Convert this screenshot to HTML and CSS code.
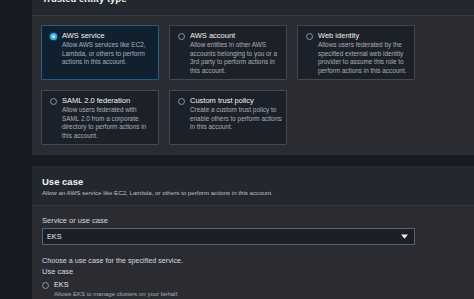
FILE: index.html
```html
<!DOCTYPE html>
<html lang="en">
<head>
    <meta charset="UTF-8">
    <meta name="viewport" content="width=device-width, initial-scale=1.0">
    <title>Select trusted entity</title>
    <link rel="stylesheet" href="styles.css">
</head>
<body>
    <div class="sidebar"></div>

    <div class="main">
        <div class="panel panel-top">
            <div class="panel-header">
                <h2>Trusted entity type</h2>
            </div>
            <div class="panel-body">
                <div class="cards">
                    <div class="card selected">
                        <span class="radio checked"></span>
                        <div class="card-text">
                            <div class="card-title">AWS service</div>
                            <div class="card-desc">Allow AWS services like EC2, Lambda, or others to perform actions in this account.</div>
                        </div>
                    </div>
                    <div class="card">
                        <span class="radio"></span>
                        <div class="card-text">
                            <div class="card-title">AWS account</div>
                            <div class="card-desc">Allow entities in other AWS accounts belonging to you or a 3rd party to perform actions in this account.</div>
                        </div>
                    </div>
                    <div class="card">
                        <span class="radio"></span>
                        <div class="card-text">
                            <div class="card-title">Web identity</div>
                            <div class="card-desc">Allows users federated by the specified external web identity provider to assume this role to perform actions in this account.</div>
                        </div>
                    </div>
                    <div class="card">
                        <span class="radio"></span>
                        <div class="card-text">
                            <div class="card-title">SAML 2.0 federation</div>
                            <div class="card-desc">Allow users federated with SAML 2.0 from a corporate directory to perform actions in this account.</div>
                        </div>
                    </div>
                    <div class="card">
                        <span class="radio"></span>
                        <div class="card-text">
                            <div class="card-title">Custom trust policy</div>
                            <div class="card-desc">Create a custom trust policy to enable others to perform actions in this account.</div>
                        </div>
                    </div>
                </div>
            </div>
        </div>

        <div class="panel">
            <div class="panel-header">
                <h2>Use case</h2>
                <p class="subtitle">Allow an AWS service like EC2, Lambda, or others to perform actions in this account.</p>
            </div>
            <div class="panel-body form">
                <div class="field-label">Service or use case</div>
                <div class="select">
                    <span>EKS</span>
                    <svg width="7" height="5" viewBox="0 0 7 5"><path d="M0 0.5h7L3.5 4.8z" fill="#e9ebed"/></svg>
                </div>
                <div class="hint">Choose a use case for the specified service.</div>
                <div class="field-label small">Use case</div>
                <div class="option">
                    <span class="radio"></span>
                    <span>EKS</span>
                </div>
                <div class="option-desc">Allows EKS to manage clusters on your behalf.</div>
            </div>
        </div>
    </div>
</body>
</html>
```

FILE: styles.css
```css
body {
    margin: 0;
    font-family: "Liberation Sans", Arial, sans-serif;
    background-color: #181b21;
    color: #e9ebed;
    display: flex;
    height: 299px;
    overflow: hidden;
}

.sidebar {
    width: 32px;
    flex-shrink: 0;
    background-color: #181b21;
}

.main {
    flex: 1;
    margin-top: -16px;
}

.panel {
    background-color: #2a2c31;
}

.panel + .panel {
    margin-top: 11px;
}

.panel-header {
    background-color: #23272e;
    border-bottom: 1px solid #363a42;
    padding: 9px 10px 8px;
}

.panel-top .panel-header {
    padding: 8px 10px 10px;
}

h2 {
    margin: 0;
    font-size: 9.5px;
    line-height: 13px;
    font-weight: bold;
    color: #f2f3f3;
}

.subtitle {
    margin: 0;
    font-size: 6.15px;
    line-height: 9px;
    color: #b9c0ca;
}

.panel-body {
    padding: 9px 9px 10px;
}

.cards {
    display: grid;
    grid-template-columns: repeat(3, 118px);
    grid-auto-rows: 55px;
    gap: 10px;
}

.card {
    display: flex;
    gap: 5px;
    box-sizing: border-box;
    padding: 5px 3px 0 8px;
    overflow: hidden;
    background-color: #1c2028;
    border: 1px solid #444a54;
    border-radius: 1px;
}

.card.selected {
    background-color: #10202f;
    border-color: #255f86;
}

.radio {
    width: 7px;
    height: 7px;
    margin-top: 1.5px;
    flex-shrink: 0;
    box-sizing: border-box;
    border: 1px solid #8d99a8;
    border-radius: 50%;
}

.radio.checked {
    border: 2px solid #38b2e8;
    background-color: #c5ecfb;
    box-shadow: 0 0 2px #2aa6de;
}

.card-title {
    font-size: 7.5px;
    line-height: 10px;
    color: #f2f3f3;
}

.card-desc {
    font-size: 6.4px;
    line-height: 8.5px;
    color: #a8b0ba;
}

.form {
    padding: 10px 10px 10px;
}

.field-label {
    font-size: 7.5px;
    line-height: 10px;
    color: #d5dae0;
}

.select {
    display: flex;
    align-items: center;
    justify-content: space-between;
    width: 373px;
    height: 17px;
    box-sizing: border-box;
    margin-top: 2px;
    padding: 0 6px 0 4px;
    background-color: #1b1f27;
    border: 1px solid #5a6270;
    font-size: 7.3px;
    color: #e9ebed;
}

.hint {
    margin-top: 11px;
    font-size: 7.2px;
    line-height: 10px;
    color: #d5dae0;
}

.field-label.small {
    margin-top: 1px;
}

.option {
    display: flex;
    align-items: center;
    gap: 5px;
    margin-top: 3px;
    font-size: 7.3px;
    line-height: 10px;
    color: #e9ebed;
}

.option .radio {
    margin-top: 0;
}

.option-desc {
    padding-left: 12px;
    font-size: 6px;
    line-height: 9px;
    color: #a8b0ba;
}
```
